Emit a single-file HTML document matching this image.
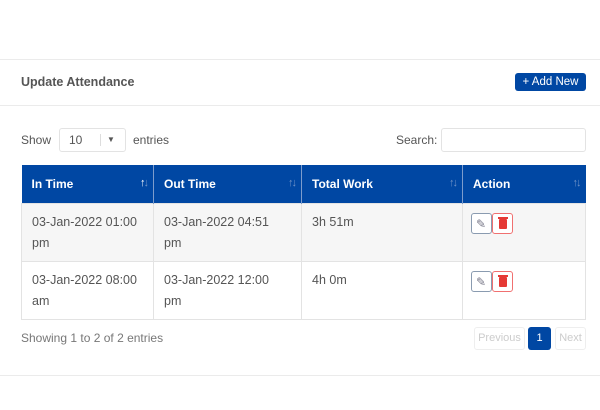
<!DOCTYPE html>
<html><head><style>
*{box-sizing:border-box;margin:0;padding:0}
body{width:600px;height:410px;background:#fff;font-family:"Liberation Sans",sans-serif;color:#555;position:relative;overflow:hidden;font-size:12px}
.line{position:absolute;left:0;width:600px;height:1px;background:#ebebeb}
.abs{position:absolute}
table{position:absolute;left:21px;top:165px;width:565px;border-collapse:collapse}
th{background:#0047a3;color:#fff;text-align:left;font-weight:bold;font-size:12px;height:38px;padding:0 10px;border-right:1px solid #7d9ccc;position:relative}
th:last-child{border-right:none}
th .s{position:absolute;right:6px;top:12px;font-size:11px;color:#6f93c6;letter-spacing:-2px}
td{border:1px solid #e3e3e3;vertical-align:top;padding:8px 10px 0;font-size:12.5px;line-height:21px;color:#555;height:58px}
td.b{padding:9px 8px 0}
tr.a td{background:#f6f6f6}
.btn{display:inline-block;width:21px;height:21px;border-radius:3px;border:1px solid;vertical-align:top;position:relative;background:#fff}
</style></head><body>
<div class="line" style="top:59px"></div>
<div class="line" style="top:105px"></div>
<div class="line" style="top:375px"></div>
<div class="abs" style="left:21px;top:75px;font-weight:bold;font-size:12.5px;color:#555">Update Attendance</div>
<div class="abs" style="left:515px;top:73px;width:71px;height:18px;background:#0047a3;border-radius:3px;color:#fff;font-size:11.5px;line-height:18px;text-align:center">+ Add New</div>
<div class="abs" style="left:21px;top:133px;font-size:12px">Show</div>
<div class="abs" style="left:59px;top:128px;width:67px;height:24px;border:1px solid #e3e3e3;border-radius:3px;font-size:12px;line-height:22px;padding-left:9px">10<span style="position:absolute;left:40px;top:5px;width:1px;height:12px;background:#ddd"></span><span style="position:absolute;left:47px;top:0;font-size:8px">▼</span></div>
<div class="abs" style="left:133px;top:133px">entries</div>
<div class="abs" style="left:396px;top:133px">Search:</div>
<div class="abs" style="left:441px;top:128px;width:145px;height:24px;border:1px solid #e3e3e3;border-radius:3px"></div>
<table>
<tr><th style="width:132px">In Time<span class="s" style="color:#fff">↑<span style="color:#6f93c6">↓</span></span></th><th style="width:148px">Out Time<span class="s">↑↓</span></th><th style="width:161px">Total Work<span class="s">↑↓</span></th><th>Action<span class="s">↑↓</span></th></tr>
<tr class="a"><td>03-Jan-2022 01:00<br>pm</td><td>03-Jan-2022 04:51<br>pm</td><td>3h 51m</td><td class="b"><span class="btn" style="border-color:#8a9bb0;color:#778"><span style="position:absolute;left:4px;top:1px;font-size:12px;line-height:18px">✎</span></span><span class="btn" style="border-color:#f07070;color:#e53935"><span style="position:absolute;left:6px;top:5px;width:8px;height:10px;background:#e53935;border-radius:1px"></span><span style="position:absolute;left:5px;top:3px;width:10px;height:2px;background:#e53935"></span></span></td></tr>
<tr><td>03-Jan-2022 08:00<br>am</td><td>03-Jan-2022 12:00<br>pm</td><td>4h 0m</td><td class="b"><span class="btn" style="border-color:#8a9bb0;color:#778"><span style="position:absolute;left:4px;top:1px;font-size:12px;line-height:18px">✎</span></span><span class="btn" style="border-color:#f07070;color:#e53935"><span style="position:absolute;left:6px;top:5px;width:8px;height:10px;background:#e53935;border-radius:1px"></span><span style="position:absolute;left:5px;top:3px;width:10px;height:2px;background:#e53935"></span></span></td></tr>
</table>
<div class="abs" style="left:21px;top:331px;font-size:12px;color:#777">Showing 1 to 2 of 2 entries</div>
<div class="abs" style="left:474px;top:327px;width:51px;height:23px;border:1px solid #eee;border-radius:3px;font-size:11px;color:#ccc;text-align:center;line-height:21px">Previous</div>
<div class="abs" style="left:528px;top:327px;width:23px;height:23px;background:#0047a3;border-radius:3px;font-size:11px;color:#fff;text-align:center;line-height:23px">1</div>
<div class="abs" style="left:555px;top:327px;width:31px;height:23px;border:1px solid #eee;border-radius:3px;font-size:11px;color:#ccc;text-align:center;line-height:21px">Next</div>
</body></html>
